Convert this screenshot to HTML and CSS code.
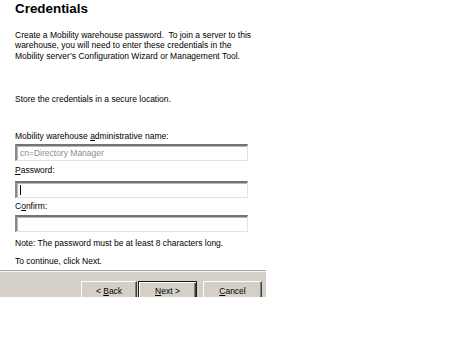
FILE: index.html
```html
<!DOCTYPE html>
<html>
<head>
<meta charset="utf-8">
<link rel="stylesheet" href="styles.css">
</head>
<body>
<div class="page">
  <h1 class="title">Credentials</h1>
  <p class="intro">Create a Mobility warehouse password.&nbsp; To join a server to this<br>warehouse, you will need to enter these credentials in the<br>Mobility server’s Configuration Wizard or Management Tool.</p>
  <p class="store">Store the credentials in a secure location.</p>
  <div class="label label-name">Mobility warehouse <u>a</u>dministrative name:</div>
  <div class="box box-name"><span class="placeholder">cn=Directory Manager</span></div>
  <div class="label label-pass"><u>P</u>assword:</div>
  <div class="box box-pass"><span class="caret"></span></div>
  <div class="label label-confirm">C<u>o</u>nfirm:</div>
  <div class="box box-confirm"></div>
  <p class="note">Note: The password must be at least 8 characters long.</p>
  <p class="continue">To continue, click Next.</p>
</div>
<div class="bar">
  <div class="buttons">
    <div class="btn btn-back">&lt; <u>B</u>ack</div>
    <div class="btn btn-next"><u>N</u>ext &gt;</div>
    <div class="btn btn-cancel"><u>C</u>ancel</div>
  </div>
</div>
</body>
</html>
```

FILE: styles.css
```css
html, body {
  margin: 0;
  padding: 0;
  background: #ffffff;
}
body {
  font-family: "Liberation Sans", Arial, sans-serif;
  color: #000000;
  font-size: 8.5px;
  line-height: 10.7px;
}
.page {
  padding: 1.2px 0 0 15px;
}
.title {
  margin: 0;
  font-size: 13.4px;
  line-height: 16px;
  font-weight: bold;
}
.intro {
  margin: 12.4px 0 0 0;
}
.store {
  margin: 31.9px 0 0 0;
}
.label u, .btn u {
  text-decoration: underline;
  text-underline-offset: 1px;
}
.label-name {
  margin-top: 26.3px;
}
.box {
  box-sizing: border-box;
  width: 233px;
  height: 17px;
  background: #ffffff;
  border-style: solid;
  border-width: 2px 1px 1px 2px;
  border-color: #747474 #e2e2e2 #e2e2e2 #8a8a8a;
  box-shadow: inset 1px 1px 0 #b8b8b8;
  padding: 2px 0 0 2px;
}
.box-name {
  margin-top: 2.55px;
}
.label-pass {
  margin-top: 3.8px;
}
.box-pass {
  margin-top: 5.5px;
}
.label-confirm {
  margin-top: 3.2px;
}
.box-confirm {
  margin-top: 3.6px;
}
.placeholder {
  color: #8e8e8e;
  padding-left: 1px;
}
.caret {
  display: inline-block;
  width: 1px;
  height: 10px;
  margin-left: 1px;
  background: #000000;
  vertical-align: top;
}
.note {
  margin: 5.5px 0 0 0;
}
.continue {
  margin: 7.3px 0 0 0;
}
.bar {
  margin-top: 3.55px;
  width: 266px;
  height: 27px;
  box-sizing: border-box;
  background: #d4d0c8;
  border-top: 1px solid #a7a7a7;
  box-shadow: inset 0 1px 0 #f4f4f4;
  overflow: hidden;
}
.buttons {
  display: flex;
  padding: 10px 0 0 81px;
}
.btn {
  box-sizing: border-box;
  height: 22px;
  padding-top: 4px;
  text-align: center;
  background: #d4d0c8;
  border: 1px solid;
  border-color: #ffffff #404040 #404040 #ffffff;
  box-shadow: inset -1px -1px 0 #808080;
}
.btn-back {
  width: 56px;
}
.btn-next {
  width: 59px;
  margin-left: 1px;
  border-color: #1a1a1a;
  box-shadow: inset 1px 1px 0 #ffffff, inset -1px -1px 0 #404040, inset -2px -2px 0 #808080;
}
.btn-cancel {
  width: 59px;
  margin-left: 6px;
}
```
